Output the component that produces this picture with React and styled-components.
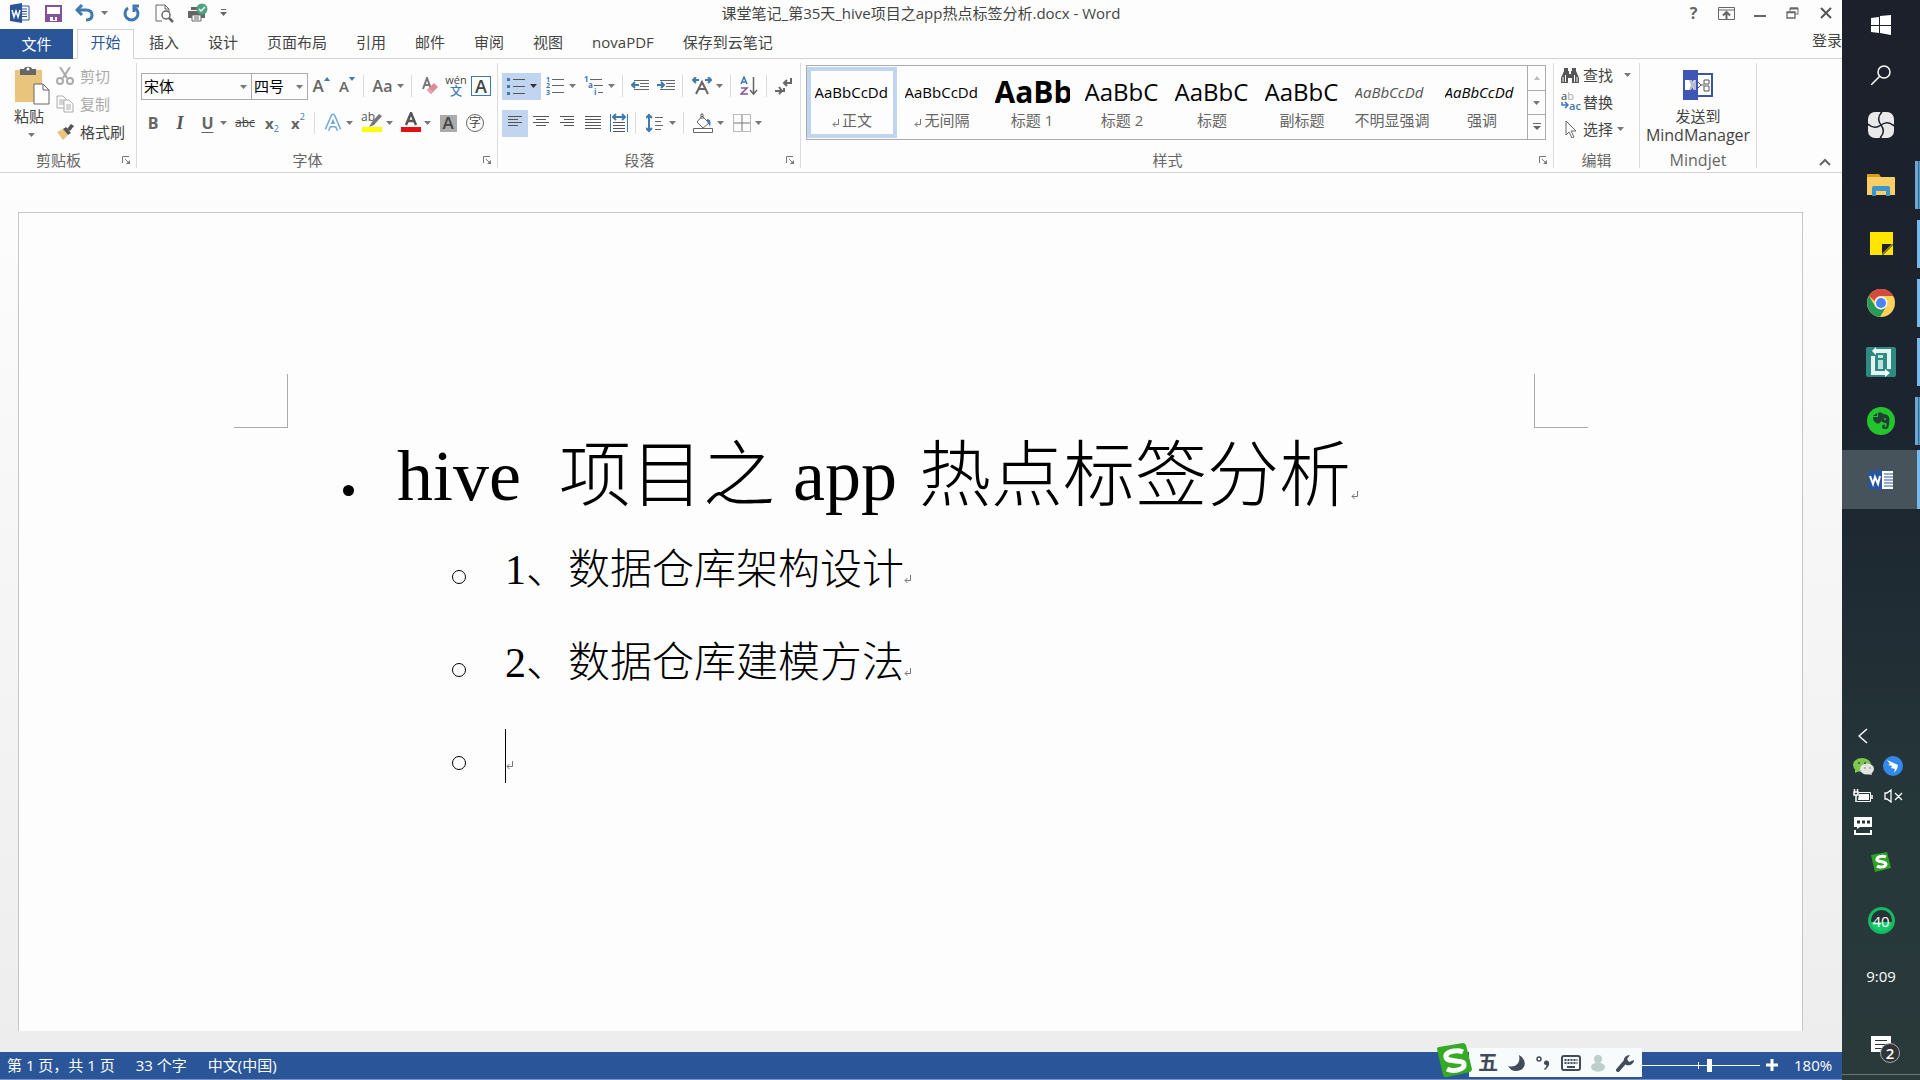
import styled, { createGlobalStyle, css } from 'styled-components';

const blue = '#2a5699';
const ink = '#444';
const accent = '#3f79b0';

export default function App() {
  return (
    <>
      <GlobalStyle />
      <Desktop>
        <WordWindow>
          <TitleBar />
          <TabBar />
          <Ribbon>
            <ClipboardGroup />
            <FontGroup />
            <ParagraphGroup />
            <StylesGroup />
            <EditGroup />
            <MindjetGroup />
            <RibbonEnd>
              <BareButton aria-label="折叠功能区">
                <svg width="12" height="8" fill="none" stroke="#666" strokeWidth="2"><path d="M1 7l5-5 5 5" /></svg>
              </BareButton>
            </RibbonEnd>
          </Ribbon>
          <Document />
          <Status />
        </WordWindow>
        <Taskbar />
      </Desktop>
    </>
  );
}

/* title bar */

function TitleBar() {
  return (
    <TitleRow>
      <QuickAccess>
        <QuickButton $w={32} aria-label="Word"><WordIcon /></QuickButton>
        <QuickButton $w={34} aria-label="保存">
          <svg width="17" height="17"><path d="M1 1h15v15H1z" fill="#fff" stroke="#84529b" strokeWidth="2" /><path d="M1 9h15v7H1z" fill="#84529b" /><path d="M5 12h7v4H5z" fill="#fff" /><path d="M8 12h2v3H8z" fill="#84529b" /></svg>
        </QuickButton>
        <QuickButton $w={28} aria-label="撤消">
          <svg width="19" height="18" fill="none" stroke={accent} strokeWidth="3"><path d="M3 6h8c4 0 6 2 6 5s-2 5-6 5" /><path d="M7 1L2 6l5 5" /></svg>
        </QuickButton>
        <QuickButton $w={12} aria-label="撤消列表"><Arrow /></QuickButton>
        <QuickButton $w={42} aria-label="恢复">
          <svg width="17" height="18" fill="none" stroke={accent} strokeWidth="3"><path d="M5 4a6.500 6.500 0 1 0 7 0" /><path d="M16 2h-5v6" /></svg>
        </QuickButton>
        <QuickButton $w={25} aria-label="打印预览">
          <svg width="19" height="19" fill="none" stroke="#666"><path d="M7 17H1V1h9l4 4v3M10 1v4h4" /><circle cx="11" cy="11" r="4" strokeWidth="1.500" /><path d="M14 14l4 4" strokeWidth="2.500" /></svg>
        </QuickButton>
        <QuickButton $w={40} aria-label="快速打印">
          <svg width="21" height="20"><path d="M4 4h9v3H4zM1 8h17v7H1z" fill="#666" /><path d="M5 12h9v6H5z" fill="#fff" stroke="#666" /><path d="M7 14h5M7 16h5" stroke="#666" /><circle cx="15" cy="6" r="5.500" fill="#4ba381" /><path d="M12 6l2 2 4-4" fill="none" stroke="#fff" strokeWidth="1.500" /></svg>
        </QuickButton>
        <QuickButton $w={12} aria-label="自定义快速访问工具栏">
          <svg width="7" height="8"><path d="M1 0h5v1H1zM0 3h7L3.500 7z" fill="#666" /></svg>
        </QuickButton>
      </QuickAccess>
      <WindowTitle>课堂笔记_第35天_hive项目之app热点标签分析.docx - Word</WindowTitle>
      <WindowControls>
        <ControlButton aria-label="帮助"><b>?</b></ControlButton>
        <ControlButton aria-label="功能区显示选项">
          <svg width="17" height="13" fill="none" stroke="#666"><path d="M.5.5h16v12H.5zM.5 3h16" /><path d="M8.500 12V5M5 8.500L8.500 5 12 8.500" strokeWidth="2" /></svg>
        </ControlButton>
        <ControlButton aria-label="最小化"><svg width="12" height="12"><path d="M0 8h12v2H0z" fill="#666" /></svg></ControlButton>
        <ControlButton aria-label="还原">
          <svg width="13" height="12" fill="none" stroke="#666"><path d="M4 4V1h8v6H9" /><path d="M4 1.500h8" strokeWidth="2" /><path d="M1 5h8v6H1zM1 5.500h8" strokeWidth="1.300" /></svg>
        </ControlButton>
        <ControlButton aria-label="关闭"><svg width="12" height="12"><path d="M1 1l10 10M11 1L1 11" stroke="#555" strokeWidth="2" /></svg></ControlButton>
      </WindowControls>
    </TitleRow>
  );
}

const tabs = ['插入', '设计', '页面布局', '引用', '邮件', '审阅', '视图', 'novaPDF', '保存到云笔记'];

function TabBar() {
  return (
    <TabRow>
      <FileTab>文件</FileTab>
      <ActiveTab>开始</ActiveTab>
      {tabs.map((name) => <Tab key={name}>{name}</Tab>)}
      <SignIn href="#login">登录</SignIn>
    </TabRow>
  );
}

/* ribbon */

function Footer({ label, launcher = true }) {
  return (
    <GroupFooter $launcher={launcher}>
      <GroupLabel>{label}</GroupLabel>
      {launcher && (
        <BareButton aria-label={label + '设置'}>
          <svg width="9" height="9" fill="none" stroke="#777"><path d="M.5 7V.5H7M3 3l4 4" /><path d="M8 4v4H4z" fill="#777" stroke="none" /></svg>
        </BareButton>
      )}
    </GroupFooter>
  );
}

function ClipboardGroup() {
  return (
    <Group $w={137}>
      <GroupBody>
        <PasteButton>
          <svg width="36" height="39">
            <path d="M1 4h27v32H1z" fill="#e8c47c" />
            <path d="M6 3h4c0-3 8-3 8 0h4v6H6z" fill="#666" /><circle cx="14" cy="3" r="1.500" fill="#fff" />
            <path d="M20 18h9l6 6v14H20z" fill="#fff" stroke="#666" /><path d="M29 18v6h6" fill="none" stroke="#666" />
          </svg>
          <span>粘贴</span>
          <Arrow />
        </PasteButton>
        <CommandList>
          <CommandButton disabled>
            <svg width="18" height="18" fill="none" stroke="#aaa" strokeWidth="2"><path d="M4 0l7 11M14 0L7 11" /><circle cx="4" cy="14" r="3" /><circle cx="14" cy="14" r="3" /></svg>
            剪切
          </CommandButton>
          <CommandButton disabled>
            <svg width="18" height="18" fill="#fff" stroke="#aaa"><path d="M1 1h6l3 3v9H1zM3 5h5M3 7h5M3 9h5" /><path d="M8 5h5l4 4v8H8zM10 10h5M10 12h5M10 14h5" /></svg>
            复制
          </CommandButton>
          <CommandButton>
            <svg width="18" height="16"><path d="M1 8l6-3 5 6-5 5C5 13 3 11 1 8z" fill="#e8c47c" /><path d="M7 5l3-2 5 6-3 2z" fill="#555" /><path d="M11 5l4-5 3 2-4 5z" fill="#555" /></svg>
            格式刷
          </CommandButton>
        </CommandList>
      </GroupBody>
      <Footer label="剪贴板" />
    </Group>
  );
}

function Drop({ w = 38, label, active, children }) {
  return (
    <DropButton $w={w} $active={active} aria-label={label}>
      <IconCell>{children}</IconCell>
      <Arrow dark={active} />
    </DropButton>
  );
}

function FontGroup() {
  return (
    <Group $w={361}>
      <ToolRows>
        <ToolRow>
          <Combo $w={111}>
            <ComboSelect aria-label="字体"><option>宋体</option></ComboSelect>
            <ComboArrow><Arrow /></ComboArrow>
          </Combo>
          <Combo $w={56} $joined>
            <ComboSelect aria-label="字号"><option>四号</option></ComboSelect>
            <ComboArrow><Arrow /></ComboArrow>
          </Combo>
          <ToolButton aria-label="增大字号"><Glyph $size={17}>A</Glyph><CaseMark><svg width="6" height="4"><path d="M0 4h6L3 0z" fill={accent} /></svg></CaseMark></ToolButton>
          <ToolButton aria-label="减小字号"><Glyph $size={15}>A</Glyph><CaseMark><svg width="6" height="4"><path d="M0 0h6L3 4z" fill={accent} /></svg></CaseMark></ToolButton>
          <Separator />
          <Drop w={40} label="更改大小写"><Glyph $size={16}>Aa</Glyph></Drop>
          <Separator />
          <ToolButton $w={28} aria-label="清除格式">
            <svg width="17" height="18"><path d="M1 12L5 1l4 11M2.500 8h5" fill="none" stroke="#777" strokeWidth="2" /><path d="M5 13l7-7 4 4-7 7z" fill="#e08b98" /><path d="M5 13l2-2 4 4-2 2z" fill="#ed9fac" /></svg>
          </ToolButton>
          <ToolButton $w={24} aria-label="拼音指南"><Pinyin><span>wén</span><b>文</b></Pinyin></ToolButton>
          <ToolButton aria-label="字符边框"><BoxedA>A</BoxedA></ToolButton>
        </ToolRow>
        <ToolRow>
          <ToolButton $w={24} aria-label="加粗"><Glyph $size={16} $bold>B</Glyph></ToolButton>
          <ToolButton $w={30} aria-label="倾斜"><SerifI>I</SerifI></ToolButton>
          <Drop w={36} label="下划线"><Glyph $size={16} $bold $underline>U</Glyph></Drop>
          <ToolButton $w={28} aria-label="删除线"><Struck>abc</Struck></ToolButton>
          <ToolButton aria-label="下标"><Glyph $size={15} $bold>x</Glyph><Sub>2</Sub></ToolButton>
          <ToolButton aria-label="上标"><Glyph $size={15} $bold>x</Glyph><Sup>2</Sup></ToolButton>
          <Separator />
          <Drop label="文本效果">
            <svg width="18" height="20" fill="none" strokeLinejoin="round"><path d="M3 17L9 3l6 14M5 12h8" stroke="#6fa8dc" strokeWidth="5" /><path d="M3 17L9 3l6 14M5 12h8" stroke="#fff" strokeWidth="2" /></svg>
          </Drop>
          <Drop w={40} label="突出显示">
            <svg width="22" height="22"><text x="0" y="9" fontFamily="Open Sans" fontSize="12" fill="#555">ab</text><path d="M18 2l3 2-8 9-5 2 3-5z" fill="#777" /><path d="M1 15h20v5H1z" fill="#ffff00" /></svg>
          </Drop>
          <Drop label="字体颜色">
            <svg width="20" height="22"><path d="M5 13L10 1l5 12M7 9h6" fill="none" stroke="#555" strokeWidth="2.500" /><path d="M0 15h20v5H0z" fill="#e40f14" /></svg>
          </Drop>
          <ToolButton aria-label="字符底纹"><ShadedA>A</ShadedA></ToolButton>
          <ToolButton $w={28} aria-label="带圈字符"><Circled>字</Circled></ToolButton>
        </ToolRow>
      </ToolRows>
      <Footer label="字体" />
    </Group>
  );
}

function AlignIcon({ rows }) {
  return (
    <svg width="16" height="14" stroke="#555">
      {rows.map(([from, to], i) => <path key={i} d={`M${from} ${i * 3 + 0.5}H${to}`} />)}
    </svg>
  );
}

function IndentIcon({ right }) {
  return (
    <svg width="18" height="14" fill="none" stroke="#666">
      <path d="M3 1.500h15M9 4.500h9M9 7.500h9M3 10.500h15" />
      <path d={right ? 'M0 6h7M4 3l3 3-3 3' : 'M1 6h7M4 3L1 6l3 3'} stroke={accent} strokeWidth="2" />
    </svg>
  );
}

function ParagraphGroup() {
  return (
    <Group $w={303}>
      <ToolRows>
        <ToolRow>
          <Drop w={39} active label="项目符号">
            <svg width="18" height="18"><path d="M6 2.500h12M6 9.500h12M6 16.500h12" stroke="#555" /><path d="M0 1h3v3H0zM0 8h3v3H0zM0 15h3v3H0z" fill={accent} /></svg>
          </Drop>
          <Drop w={39} label="编号">
            <svg width="18" height="20"><path d="M6 3.500h12M6 9.500h12M6 16.500h12" stroke="#666" /><g fontFamily="Open Sans" fontWeight="700" fontSize="7" fill={accent}><text y="6">1</text><text y="12">2</text><text y="19">3</text></g></svg>
          </Drop>
          <Drop w={39} label="多级列表">
            <svg width="20" height="20"><path d="M6 3.500h12M10 9.500h9M14 16.500h5" stroke="#666" /><g fontFamily="Open Sans" fontWeight="700" fontSize="8" fill={accent}><text y="6">1</text><text x="4" y="12">a</text><text x="10" y="19">i</text></g></svg>
          </Drop>
          <Separator />
          <ToolButton aria-label="减少缩进量"><IndentIcon /></ToolButton>
          <ToolButton aria-label="增加缩进量"><IndentIcon right /></ToolButton>
          <Separator />
          <Drop w={40} label="中文版式">
            <svg width="20" height="18" fill="none"><path d="M4 17l6-12 6 12M7 12h6" stroke="#666" strokeWidth="2" /><path d="M1 3h6M4 0L1 3l3 3M19 3h-6M16 0l3 3-3 3" stroke={accent} strokeWidth="2" /></svg>
          </Drop>
          <Separator />
          <ToolButton $w={28} aria-label="排序">
            <svg width="18" height="20" fill="none"><path d="M1 8l3-7 3 7M2 6h4" stroke={accent} strokeWidth="1.500" /><path d="M1 12h6l-6 6h7" stroke="#84529b" strokeWidth="1.500" /><path d="M13.500 1v17M10 14l3.500 4 3.500-4" stroke="#666" strokeWidth="1.500" /></svg>
          </ToolButton>
          <Separator />
          <ToolButton $w={26} aria-label="显示编辑标记">
            <svg width="18" height="18" fill="none" stroke="#666" strokeWidth="2"><path d="M16 1v5H9M12 3L9 6l3 3M0 14h6M4 10l3 4-3 3M7 14h2v-3" /></svg>
          </ToolButton>
        </ToolRow>
        <ToolRow>
          <ToolButton $active aria-label="左对齐"><AlignIcon rows={[[1, 15], [1, 11], [1, 15], [1, 11]]} /></ToolButton>
          <ToolButton aria-label="居中"><AlignIcon rows={[[0, 16], [3, 13], [0, 16], [3, 13]]} /></ToolButton>
          <ToolButton aria-label="右对齐"><AlignIcon rows={[[1, 15], [5, 15], [1, 15], [5, 15]]} /></ToolButton>
          <ToolButton aria-label="两端对齐"><AlignIcon rows={[[0, 16], [0, 16], [0, 16], [0, 16], [0, 16]]} /></ToolButton>
          <ToolButton aria-label="分散对齐">
            <svg width="18" height="20" fill="none"><path d="M.5 1v18M17.500 1v18" stroke={accent} /><path d="M3 4h12M6 1L3 4l3 3M12 1l3 3-3 3" stroke={accent} strokeWidth="2" /><path d="M3 9.500h12M3 12.500h12M3 15.500h12M3 18.500h12" stroke="#555" /></svg>
          </ToolButton>
          <Separator />
          <Drop w={40} label="行距">
            <svg width="18" height="20" fill="none"><path d="M3 2v16M0 5l3-3 3 3M0 15l3 3 3-3" stroke={accent} strokeWidth="2" /><path d="M9 4.500h8M9 8.500h6M9 12.500h8M9 16.500h6" stroke="#666" /></svg>
          </Drop>
          <Separator />
          <Drop w={40} label="底纹">
            <svg width="20" height="20" fill="none" stroke="#666"><path d="M9 3l7 7-6 5-6-6zM8 6V1h2v5" /><path d="M14 6c4 0 4 4 3 8-1-3-2-4-3-5z" fill={accent} stroke="none" /><path d="M.5 15.500h19v4H.5z" fill="#fff" /></svg>
          </Drop>
          <Drop label="边框">
            <svg width="18" height="18" fill="none" stroke="#777"><path d="M.5.5h17v17H.5z" strokeDasharray="1 1" /><path d="M9 1v16M1 9h16" /></svg>
          </Drop>
        </ToolRow>
      </ToolRows>
      <Footer label="段落" />
    </Group>
  );
}

const styleItems = [
  { name: '正文', sample: 'AaBbCcDd', mark: true, active: true },
  { name: '无间隔', sample: 'AaBbCcDd', mark: true },
  { name: '标题 1', sample: 'AaBb', size: 30, bold: true },
  { name: '标题 2', sample: 'AaBbC', size: 24 },
  { name: '标题', sample: 'AaBbC', size: 24 },
  { name: '副标题', sample: 'AaBbC', size: 24 },
  { name: '不明显强调', sample: 'AaBbCcDd', italic: true, color: '#555' },
  { name: '强调', sample: 'AaBbCcDd', italic: true },
];

function StylesGroup() {
  return (
    <Group $w={753}>
      <GalleryWrap>
        <Gallery>
          {styleItems.map((item) => (
            <StyleItem key={item.name} $active={item.active}>
              <Sample $size={item.size} $bold={item.bold} $italic={item.italic} $color={item.color}>{item.sample}</Sample>
              <StyleName>{item.mark && <ReturnMark />}{item.name}</StyleName>
            </StyleItem>
          ))}
          <GalleryScroll>
            <ScrollButton aria-label="上一行" disabled><svg width="6" height="4"><path d="M0 4h6L3 0z" fill="#bbb" /></svg></ScrollButton>
            <ScrollButton aria-label="下一行"><Arrow /></ScrollButton>
            <ScrollButton aria-label="其他"><svg width="8" height="8"><path d="M0 0h8v1H0zM0 3h8L4 7z" fill="#666" /></svg></ScrollButton>
          </GalleryScroll>
        </Gallery>
      </GalleryWrap>
      <Footer label="样式" />
    </Group>
  );
}

function EditGroup() {
  return (
    <Group $w={86}>
      <EditList>
        <CommandButton $gap={4}>
          <svg width="18" height="17" fill="#555"><path d="M3 1h4v3h1v3h2V4h1V1h4v3l3 7v5h-7v-5H7v5H0v-5l3-7z" /><path d="M2 10v5M4.500 8v7M13.500 8v7M16 10v5" stroke="#fff" /></svg>
          查找<ArrowSpace $pad={7}><Arrow /></ArrowSpace>
        </CommandButton>
        <CommandButton $gap={2}>
          <svg width="20" height="20"><g fontFamily="Open Sans" fontSize="11"><text y="8" fill="#444">a<tspan fill="#aaa">b</tspan></text><text x="8" y="18" fill={accent} fontWeight="600">ac</text></g><path d="M1 10v3h5M4 10l3 3-3 3" fill="none" stroke={accent} strokeWidth="1.500" /></svg>
          替换
        </CommandButton>
        <CommandButton $gap={4}>
          <svg width="18" height="18"><path d="M5 1v14l3-3 3 6 2-1-3-6h5z" fill="#fff" stroke="#666" /></svg>
          选择<ArrowSpace $pad={0}><Arrow /></ArrowSpace>
        </CommandButton>
      </EditList>
      <Footer label="编辑" launcher={false} />
    </Group>
  );
}

function MindjetGroup() {
  return (
    <Group $w={117} $size={16}>
      <SendButton>
        <svg width="30" height="30">
          <path d="M14 4h15v22H14z" fill="#fff" stroke="#3b55a5" strokeWidth="2" /><path d="M0 0h15v30H0z" fill="#3f55b3" />
          <path d="M2 10h5l2 3 2-3h2v10h-2l-2-3-2 3H2z" fill="#fff" /><path d="M6 10h3l1 3 2-3h1v10h-2l-1-3-2 3H6l2-5z" fill="#b9bccf" />
          <path d="M15 12l3 3-3 3M18 15h3M21 10h5v4h-5zM21 16h5v5h-5z" fill="none" stroke="#555" />
        </svg>
        <SendLabel><Small>发送到</Small><br />MindManager</SendLabel>
      </SendButton>
      <Footer label="Mindjet" launcher={false} />
    </Group>
  );
}

/* document */

const outline = ['1、数据仓库架构设计', '2、数据仓库建模方法', ''];

function Document() {
  return (
    <Canvas>
      <Page>
        <Corners>
          <Corner $side="right" />
          <Corner $side="left" />
        </Corners>
        <Article>
          <HeadingLine>
            <Dot />
            <DocTitle><Latin $chars={4}>hive</Latin>项目之<Latin $chars={3} $inner>app</Latin>热点标签分析</DocTitle>
            <ReturnMark />
          </HeadingLine>
          <Outline>
            {outline.map((text, i) => (
              <OutlineItem key={i}>
                <Ring />
                {text ? <span>{text}</span> : <Caret />}
                <ReturnMark />
              </OutlineItem>
            ))}
          </Outline>
        </Article>
      </Page>
    </Canvas>
  );
}

function Status() {
  return (
    <StatusBar>
      <StatusText>第 1 页，共 1 页</StatusText>
      <StatusText>33 个字</StatusText>
      <StatusText>中文(中国)</StatusText>
      <Zoom>
        <ZoomRange type="range" min="0" max="100" defaultValue="60" aria-label="显示比例" />
        <ZoomPlus aria-label="放大"><svg width="12" height="12"><path d="M0 4.500h12v3H0zM4.500 0h3v12h-3z" fill="#fff" /></svg></ZoomPlus>
        <ZoomValue>180%</ZoomValue>
      </Zoom>
      <ImeBar>
        <ImeLogo>
          <svg width="37" height="36"><path d="M1 6Q1 4 3 4L27 0q2 0 3 2l6 24q0 2-2 3L11 34q-3 1-4-2z" fill="#35ab25" /><path d="M27 9C20 6 9 9 10 14c1 6 17 2 18 7 1 6-11 8-17 5" fill="none" stroke="#fff" strokeWidth="5" /></svg>
        </ImeLogo>
        <ImeButton $w={30}>五</ImeButton>
        <ImeButton aria-label="半角"><svg width="18" height="18"><path d="M11 1c9 5 7 16-3 16-4 0-6-2-8-5 7 2 13-2 11-11z" fill="#414b5c" /></svg></ImeButton>
        <ImeButton aria-label="中文标点"><svg width="16" height="18"><circle cx="3" cy="5" r="2" fill="none" stroke="#414b5c" strokeWidth="1.500" /><path d="M9 7c4-2 7 4 0 9l-1-1c2-2 3-3 2-4-2 0-3-3-1-4z" fill="#414b5c" /></svg></ImeButton>
        <ImeButton aria-label="软键盘"><svg width="20" height="16"><rect x="1" y="1" width="18" height="14" rx="2" fill="none" stroke="#414b5c" strokeWidth="2" /><path d="M3.500 5h13M3.500 8h13" stroke="#414b5c" strokeWidth="2" strokeDasharray="2 1" /><path d="M6 12h8" stroke="#414b5c" strokeWidth="2" /></svg></ImeButton>
        <ImeButton aria-label="用户"><svg width="16" height="18" fill="#bcd0cb"><circle cx="8" cy="5" r="4" /><path d="M1 13c0-6 14-6 14 0 0 6-14 6-14 0z" /></svg></ImeButton>
        <ImeButton aria-label="工具箱"><svg width="18" height="18"><path d="M2 16l7-8" stroke="#414b5c" strokeWidth="4" strokeLinecap="round" /><path d="M8 8c-1-4 2-7 6-7l-3 4 2 3 5-2c0 4-4 6-8 5z" fill="#414b5c" /></svg></ImeButton>
      </ImeBar>
    </StatusBar>
  );
}

/* taskbar */

function WordIcon() {
  return (
    <svg width="20" height="20"><path d="M11 3h8v14h-8" fill="#fff" stroke={blue} /><path d="M12 6h5M12 8.500h5M12 11h5M12 13.500h5" stroke={blue} /><path d="M0 2l12-2v20L0 18z" fill={blue} /><path d="M2 7l2 7 2-6 2 6 2-7" fill="none" stroke="#fff" strokeWidth="1.500" /></svg>
  );
}

function Taskbar() {
  return (
    <TaskColumn>
      <SystemButton aria-label="开始">
        <svg width="20" height="20" fill="#fff"><path d="M0 3l8-1v8H0zM9 1l11-1v10H9zM0 11h8v7l-8-1zM9 11h11v9L9 18z" /></svg>
      </SystemButton>
      <SystemButton aria-label="搜索">
        <svg width="20" height="20" fill="none" stroke="#fff" strokeWidth="1.500"><circle cx="13" cy="7" r="6" /><path d="M8.500 11.500L0 20" /></svg>
      </SystemButton>
      <SystemButton aria-label="应用">
        <svg width="26" height="26">
          <path d="M7 0h5l1 1 1-1h5a7 7 0 0 1 7 7v5l-1 1 1 1v5a7 7 0 0 1-7 7h-5l-1-1-1 1H7a7 7 0 0 1-7-7v-5l1-1-1-1V7a7 7 0 0 1 7-7z" fill="#e9e9e9" />
          {[0, 90, 180, 270].map((a) => <path key={a} transform={`rotate(${a} 13 13)`} d="M14 0C10 4 10 9 13 13" fill="none" stroke="#1d222d" strokeWidth="1.500" />)}
        </svg>
      </SystemButton>
      <Apps>
        <AppButton aria-label="文件资源管理器">
          <svg width="28" height="24"><path d="M0 2q0-1 1-1h10l2 3h14q1 0 1 1v17H0z" fill="#f8cf67" /><path d="M0 1h12l2 3H0z" fill="#db9b1a" /><path d="M5 23v-8q0-2 2-2h14q2 0 2 2v8h-4v-5H9v5z" fill="#3f94cc" /></svg>
          <Running $multi />
        </AppButton>
        <AppButton aria-label="便笺">
          <svg width="23" height="23"><path d="M0 0h23v12L12 23H0z" fill="#ffe500" /><path d="M12 12h10L12 22z" fill="#1f222b" /><path d="M23 13v10H13z" fill="#ffe500" /></svg>
          <Running />
        </AppButton>
        <AppButton aria-label="Chrome">
          <svg width="28" height="28"><circle cx="14" cy="14" r="14" fill="#fcd25c" /><path d="M2 7a14 14 0 0 1 24.400 0H14a7 7 0 0 0-6.500 5z" fill="#d34b3f" /><path d="M2 7a14 14 0 0 0 11 21l6-10a7 7 0 0 1-11-1z" fill="#289b5b" /><circle cx="14" cy="14" r="6.500" fill="#f5f5f5" /><circle cx="14" cy="14" r="5" fill="#4a85ed" /></svg>
          <Running />
        </AppButton>
        <AppButton aria-label="笔记工具">
          <svg width="30" height="30"><rect width="30" height="30" rx="2" fill="#2e8b83" /><path d="M10 4h13v18M20 26H7V9" fill="none" stroke="#e8f3f1" strokeWidth="4" /><path d="M10 0L6 4l4 4zM19 22l5 4-5 4z" fill="#fff" /><path d="M12 8h5v3h-5zM12 13h5v9h-5z" fill="#bfe0dc" /></svg>
          <Running />
        </AppButton>
        <AppButton aria-label="印象笔记">
          <svg width="28" height="28"><circle cx="14" cy="14" r="14" fill="#23c52f" /><path d="M11 6c2-1 5 0 5 1 3 0 5 1 6 3 1 4 0 9-1 11-2 2-6 1-6-1 0-3 3-3 3-2v1c-1 0-1 1 0 1 2 0 2-2 1-4-2 0-4-1-5-2-1 3-3 3-5 2-2-1-3-3-3-6h5z" fill="#204031" /><path d="M6 9l4-3v3z" fill="#204031" /><circle cx="18" cy="12" r="1" fill="#23c52f" /></svg>
          <Running $multi />
        </AppButton>
        <AppButton $active aria-label="Word">
          <svg width="26" height="22"><path d="M14 2h11v18H14z" fill="#fff" /><path d="M16 5h9M16 8h9M16 11h9M16 14h9M16 17h9" stroke={blue} /><path d="M0 2l14-2v22L0 20z" fill={blue} /><path d="M2 7l3 8 2-7 3 7 2-8" fill="none" stroke="#fff" strokeWidth="2" /></svg>
          <Running $full />
        </AppButton>
      </Apps>
      <Tray>
        <TrayButton aria-label="显示隐藏的图标"><svg width="10" height="16" fill="none" stroke="#fff" strokeWidth="1.500"><path d="M9 1L1 8l8 7" /></svg></TrayButton>
        <i />
        <TrayButton aria-label="微信"><svg width="21" height="17"><ellipse cx="9" cy="7" rx="9" ry="7" fill="#7fc84a" /><ellipse cx="14" cy="11" rx="7" ry="5.500" fill="#e2e5e2" /><path d="M2 11v4l4-2z" fill="#7fc84a" /><path d="M18 14l1 3-4-1z" fill="#e2e5e2" /><path d="M5 5h2M11 5h2" stroke="#375" strokeWidth="2" /><path d="M11 10h2M16 10h2" stroke="#888" /></svg></TrayButton>
        <TrayButton aria-label="钉钉"><svg width="20" height="20"><circle cx="10" cy="10" r="10" fill="#3289e7" /><path d="M4 4l11 5-1 4-3 4 1-4-4-1 1-2-4-1 2-1z" fill="#fff" /></svg></TrayButton>
        <TrayButton aria-label="电池"><svg width="20" height="15" fill="none" stroke="#fff"><path d="M6 3.500h11.500v9H4" /><path d="M6 5h10v6H5z" fill="#fff" stroke="none" /><path d="M19 6v4M1 3h4v3H1zM1.500 0v3M4.500 0v3M3 6v7" strokeWidth="1.500" /></svg></TrayButton>
        <TrayButton aria-label="静音"><svg width="19" height="14" fill="none" stroke="#fff" strokeWidth="1.300"><path d="M1 4h2l4-3v12L3 10H1zM11 4l7 7M18 4l-7 7" /></svg></TrayButton>
        <TrayButton aria-label="消息"><svg width="18" height="18"><path d="M0 0h18v10H6l-3 2v-2H0z" fill="#fff" /><path d="M3 5h3M8 5h3M13 5h3" stroke="#263437" strokeWidth="3" /><path d="M1 13v4h16v-4" fill="none" stroke="#fff" strokeWidth="2" /></svg></TrayButton>
      </Tray>
      <TrayWide aria-label="搜狗输入法">
        <svg width="20" height="20"><path d="M0 3l16-3 4 16-16 4z" fill="#2fa226" /><path d="M15 5c-4-2-10 0-9 3 1 2 8 1 9 4 0 3-6 4-9 2" fill="none" stroke="#fff" strokeWidth="3" /></svg>
      </TrayWide>
      <TrayWide><Battery>40</Battery></TrayWide>
      <Clock>9:09</Clock>
      <NoticeButton aria-label="通知">
        <svg width="20" height="20"><path d="M0 0h20v16h-7l-3 4v-4H0z" fill="#fff" /><path d="M4 4.500h12M4 8.500h12M4 12.500h8" stroke="#263437" /></svg>
        <Badge>2</Badge>
      </NoticeButton>
    </TaskColumn>
  );
}

function Arrow({ dark }) {
  return <svg width="7" height="4"><path d="M0 0h7L3.500 4z" fill={dark ? '#333' : '#777'} /></svg>;
}

function ReturnMark() {
  return <MarkSvg width="7" height="9" viewBox="0 0 7 9"><path d="M6.500 0v5.500H1M3.500 3L1 5.500 3.500 8" fill="none" stroke="#777" /></MarkSvg>;
}

const GlobalStyle = createGlobalStyle`
  * {
    box-sizing: border-box;
  }
  body {
    margin: 0;
    overflow: hidden;
    font: 15px/20px "Open Sans", "Noto Sans CJK SC", sans-serif;
    color: ${ink};
  }
  button, select {
    font: inherit;
    color: inherit;
    background: none;
    border: 0;
    padding: 0;
    margin: 0;
  }
  svg {
    display: block;
    flex: none;
  }
`;

const center = css`
  display: flex;
  align-items: center;
  justify-content: center;
`;

const Desktop = styled.div`
  display: flex;
  height: 100vh;
`;

const WordWindow = styled.main`
  flex: 1;
  min-width: 0;
  display: flex;
  flex-direction: column;
  background: #fdfdfd;
`;

const TitleRow = styled.header`
  display: grid;
  grid-template-columns: 1fr auto 1fr;
  align-items: center;
  height: 29px;
  padding-bottom: 3px;
  flex: none;
`;

const QuickAccess = styled.div`
  display: flex;
  padding-left: 4px;
`;

const QuickButton = styled.button`
  ${center}
  width: ${(p) => p.$w}px;
  height: 24px;
`;

const WindowTitle = styled.div`
  line-height: 22px;
  white-space: nowrap;
`;

const WindowControls = styled.div`
  display: flex;
  justify-content: flex-end;
`;

const ControlButton = styled.button`
  ${center}
  width: 33px;
  height: 24px;
  color: #666;
  font-size: 16px;
`;

const TabRow = styled.nav`
  display: flex;
  gap: 1px;
  height: 30px;
  flex: none;
  border-bottom: 1px solid #d2d2d2;
`;

const Tab = styled.button`
  padding: 0 14px;
  height: 26px;
  white-space: nowrap;
`;

const FileTab = styled(Tab)`
  width: 73px;
  height: 30px;
  background: ${blue};
  color: #fff;
  margin-right: 3px;
`;

const ActiveTab = styled(Tab)`
  width: 57px;
  height: 30px;
  padding: 0 0 4px;
  border: 1px solid #d2d2d2;
  border-bottom-color: #fdfdfd;
  color: ${blue};
`;

const SignIn = styled.a`
  margin-left: auto;
  color: ${ink};
  text-decoration: none;
  line-height: 22px;
`;

const Ribbon = styled.section`
  display: flex;
  flex: none;
  padding: 4px 0;
  border-bottom: 1px solid #d2d2d2;
`;

const Group = styled.div`
  display: flex;
  flex-direction: column;
  width: ${(p) => p.$w}px;
  height: 105px;
  font-size: ${(p) => p.$size || 15}px;
  border-right: 1px solid #dcdcdc;
  flex: none;
`;

const GroupBody = styled.div`
  flex: 1;
  display: flex;
  padding-left: 8px;
`;

const GroupFooter = styled.div`
  display: flex;
  align-items: center;
  height: 16px;
  padding: 0 ${(p) => (p.$launcher ? 5 : 0)}px 0 0;
  line-height: 16px;
  color: #666;
`;

const GroupLabel = styled.span`
  flex: 1;
  padding-right: ${(p) => p.$end || 5}px;
  text-align: center;

  &:only-child {
    padding: 0;
  }
`;

const BareButton = styled.button`
  ${center}
`;

const RibbonEnd = styled.div`
  flex: 1;
  display: flex;
  justify-content: flex-end;
  align-items: flex-end;
  padding: 0 11px 2px 0;
`;

const PasteButton = styled.button`
  display: flex;
  flex-direction: column;
  align-items: center;
  padding: 3px 0 0 6px;
  width: 42px;
  margin-right: 6px;

  span {
    margin: 1px 6px 7px 0;
  }

  svg + span + svg {
    margin-right: 2px;
  }
`;

const CommandList = styled.div`
  display: flex;
  flex-direction: column;
  gap: 8px;
  padding-top: 3px;
`;

const EditList = styled(CommandList)`
  flex: 1;
  gap: 7px;
  padding: 2px 0 0 7px;
`;

const CommandButton = styled.button`
  display: flex;
  align-items: center;
  gap: ${(p) => p.$gap || 6}px;
  height: 20px;
  white-space: nowrap;

  &:disabled {
    color: #aaa;
  }
`;

const ArrowSpace = styled.span`
  padding-left: ${(p) => p.$pad}px;
`;

const ToolRows = styled.div`
  flex: 1;
  display: flex;
  flex-direction: column;
  gap: 10px;
  padding: 10px 0 0 4px;
`;

const ToolRow = styled.div`
  display: flex;
  height: 27px;
`;

const ToolButton = styled.button`
  ${center}
  width: ${(p) => p.$w || 26}px;
  height: 27px;
  padding-bottom: 1px;
  background: ${(p) => (p.$active ? '#c2d5f0' : 'none')};
`;

const DropButton = styled.button`
  display: grid;
  grid-template-columns: 1fr 11px;
  align-items: center;
  width: ${(p) => p.$w}px;
  height: 27px;
  padding-bottom: 1px;
  background: ${(p) => (p.$active ? '#c2d5f0' : 'none')};
`;

const IconCell = styled.span`
  ${center}
`;

const Separator = styled.i`
  width: 1px;
  height: 22px;
  margin: 2px 4px 0 3px;
  background: #dcdcdc;
`;

const Combo = styled.div`
  display: grid;
  width: ${(p) => p.$w}px;
  border: 1px solid #ababab;
  border-left-width: ${(p) => (p.$joined ? 0 : 1)}px;
`;

const ComboSelect = styled.select`
  grid-area: 1 / 1;
  appearance: none;
  padding: 0 0 1px 2px;
  color: #000;
`;

const ComboArrow = styled.span`
  grid-area: 1 / 1;
  align-self: center;
  justify-self: end;
  padding-right: 4px;
  pointer-events: none;
`;

const Glyph = styled.span`
  font-size: ${(p) => p.$size}px;
  font-weight: ${(p) => (p.$bold ? 700 : 600)};
  line-height: 20px;
  color: #666;
  text-decoration: ${(p) => (p.$underline ? 'underline' : 'none')};
  text-underline-offset: 3px;
`;

const CaseMark = styled.span`
  align-self: flex-start;
  padding-top: 4px;
`;

const Pinyin = styled.span`
  display: grid;
  justify-items: center;
  font-size: 11px;
  line-height: 11px;

  b {
    font-size: 12px;
    font-weight: 500;
    line-height: 13px;
    color: ${accent};
  }
`;

const BoxedA = styled.span`
  ${center}
  width: 20px;
  height: 20px;
  border: 1px solid ${accent};
  font-size: 18px;
  font-weight: 600;
`;

const ShadedA = styled.span`
  ${center}
  width: 17px;
  height: 17px;
  background: #ababab;
  font-size: 17px;
  font-weight: 600;
`;

const Circled = styled.span`
  ${center}
  width: 18px;
  height: 18px;
  border: 1px solid #666;
  border-radius: 50%;
  font-size: 12px;
`;

const SerifI = styled.span`
  font: italic 700 18px/20px "Liberation Serif", serif;
  color: #555;
`;

const Struck = styled.span`
  font-size: 12px;
  text-decoration: line-through;
`;

const Sub = styled.span`
  align-self: flex-end;
  font-size: 9px;
  line-height: 14px;
  color: ${accent};
`;

const Sup = styled(Sub)`
  align-self: flex-start;
`;

const GalleryWrap = styled.div`
  flex: 1;
  padding: 2px 7px 0 5px;
`;

const Gallery = styled.div`
  display: flex;
  height: 75px;
  border: 1px solid #ababab;
`;

const StyleItem = styled.button`
  display: flex;
  flex-direction: column;
  align-items: center;
  flex: 1;
  min-width: 0;
  margin: 1px 0;
  padding-top: 6px;
  border: 4px solid ${(p) => (p.$active ? '#c2d5f0' : 'transparent')};
`;

const Sample = styled.span`
  width: 75px;
  height: 33px;
  overflow: hidden;
  font-size: ${(p) => p.$size || 15}px;
  font-weight: ${(p) => (p.$bold ? 700 : 400)};
  font-style: ${(p) => (p.$italic ? 'italic' : 'normal')};
  line-height: 30px;
  color: ${(p) => p.$color || '#000'};
  text-align: left;
  white-space: nowrap;
`;

const StyleName = styled.span`
  display: flex;
  align-items: center;
  gap: 3px;
  color: #666;
  white-space: nowrap;

  svg {
    margin-top: 6px;
  }
`;

const GalleryScroll = styled.div`
  display: flex;
  flex-direction: column;
  width: 18px;
  border-left: 1px solid #ababab;
`;

const ScrollButton = styled.button`
  ${center}
  flex: 1;

  & + & {
    border-top: 1px solid #ababab;
  }
`;

const SendButton = styled.button`
  flex: 1;
  display: flex;
  flex-direction: column;
  align-items: center;
  padding-top: 7px;
`;

const SendLabel = styled.span`
  margin-top: 7px;
  line-height: 19px;
`;

const Small = styled.span`
  font-size: 15px;
`;

const Canvas = styled.div`
  flex: 1;
  min-height: 0;
  display: flex;
  padding: 39px 39px 21px 18px;
  background: linear-gradient(#fdfdfd, #ededed);
`;

const Page = styled.div`
  flex: 1;
  overflow: hidden;
  padding: 161px 214px 0 215px;
  background: #fdfdfd;
  border: 1px solid #c6c6c6;
  border-bottom: 0;
`;

const Corners = styled.div`
  display: flex;
  justify-content: space-between;
`;

const Corner = styled.i`
  width: 54px;
  height: 54px;
  border-bottom: 1px solid #aaa;
  border-${(p) => p.$side}: 1px solid #aaa;
`;

const Article = styled.article`
  padding-left: 109px;
  color: #000;
  font-family: "Liberation Serif", "Noto Sans CJK SC", serif;
  font-weight: 300;
`;

const HeadingLine = styled.div`
  display: flex;
  align-items: center;
  height: 95px;

  > svg {
    margin-top: 40px;
  }
`;

const Dot = styled.i`
  width: 11px;
  height: 11px;
  margin: 30px 43px 0 0;
  border-radius: 50%;
  background: #000;
`;

const DocTitle = styled.h1`
  margin: 0;
  font-size: 72px;
  line-height: 96px;
  font-weight: 300;
  white-space: nowrap;
`;

const Latin = styled.span`
  display: inline-block;
  width: ${(p) => p.$chars * 36}px;
  margin: 0 18px 0 ${(p) => (p.$inner ? 18 : 0)}px;
`;

const Outline = styled.ul`
  margin: 0;
  padding: 0 0 0 109px;
  list-style: none;
`;

const OutlineItem = styled.li`
  display: flex;
  align-items: center;
  height: 93px;
  font-size: 42px;
  white-space: nowrap;

  > svg {
    margin-top: 20px;
  }
`;

const Ring = styled.i`
  width: 14px;
  height: 14px;
  margin: 14px 39px 0 0;
  border: 1px solid #000;
  border-radius: 50%;
`;

const Caret = styled.i`
  width: 1px;
  height: 54px;
  background: #000;
`;

const MarkSvg = styled.svg`
  align-self: center;
`;

const StatusBar = styled.footer`
  position: relative;
  display: flex;
  align-items: center;
  gap: 21px;
  flex: none;
  height: 28px;
  padding: 0 8px 1px 7px;
  background: ${blue};
  border-bottom: 1px solid #7a93bd;
  color: #fff;
`;

const StatusText = styled.span`
  white-space: nowrap;
`;

const Zoom = styled.div`
  display: flex;
  align-items: center;
  margin-left: auto;
`;

const ZoomRange = styled.input`
  appearance: none;
  width: 124px;
  height: 13px;
  margin: 0 6px 0 0;
  background:
    linear-gradient(#fff, #fff) center / 100% 1px no-repeat,
    linear-gradient(#fff, #fff) center / 1px 7px no-repeat;

  &::-webkit-slider-thumb {
    appearance: none;
    width: 5px;
    height: 13px;
    background: #fff;
  }
`;

const ZoomPlus = styled.button`
  margin-right: 16px;
`;

const ZoomValue = styled.span`
  width: 40px;
`;

const ImeBar = styled.div`
  position: absolute;
  right: 200px;
  bottom: 2px;
  display: flex;
  align-items: center;
  height: 29px;
  padding-right: 4px;
  background: #f8fbfb;
  color: #414b5c;
`;

const ImeLogo = styled.span`
  margin: 0 0 4px -33px;
`;

const ImeButton = styled.button`
  ${center}
  width: ${(p) => p.$w || 27}px;
  height: 27px;
  font-size: 20px;
  font-weight: 700;
`;

const TaskColumn = styled.aside`
  display: flex;
  flex-direction: column;
  width: 78px;
  flex: none;
  color: #fff;
  background: linear-gradient(#1c202b, #1c2630 45%, #26373a 75%, #2a3a3b);
`;

const SystemButton = styled.button`
  ${center}
  height: 50px;
`;

const Apps = styled.div`
  padding-top: 5px;
  margin-bottom: auto;
`;

const AppButton = styled.button`
  position: relative;
  ${center}
  width: 100%;
  height: 59px;
  background: ${(p) => (p.$active ? '#46535b' : 'none')};
`;

const Running = styled.i`
  position: absolute;
  right: 0;
  top: ${(p) => (p.$full ? 0 : 6)}px;
  bottom: ${(p) => (p.$full ? 0 : 5)}px;
  width: ${(p) => (p.$multi ? 5 : 3)}px;
  background: ${(p) => (p.$multi ? 'linear-gradient(90deg, #6ea6cf 3px, #33688f 3px 4px, #5797c8 4px)' : '#76b9ed')};
`;

const Tray = styled.div`
  display: grid;
  grid-template-columns: 30px 30px;
  grid-auto-rows: 30px;
  padding-left: 6px;
`;

const TrayButton = styled.button`
  ${center}
`;

const TrayWide = styled.button`
  ${center}
  height: 59px;

  ${Tray} + & {
    height: 42px;
    margin-bottom: 8px;
  }
`;

const Battery = styled.span`
  ${center}
  width: 27px;
  height: 27px;
  border: 3px solid #16b765;
  border-radius: 50%;
  background: linear-gradient(#263437 55%, #12cc69 55%);
`;

const Clock = styled.time`
  padding: 16px 0 39px;
  text-align: center;
`;

const NoticeButton = styled.button`
  position: relative;
  ${center}
  height: 50px;
  padding-bottom: 8px;
  margin-bottom: 5px;
  border-bottom: 1px solid #6b7777;
`;

const Badge = styled.span`
  position: absolute;
  left: 38px;
  top: 18px;
  ${center}
  width: 20px;
  height: 20px;
  border: 1px solid #aaa;
  border-radius: 50%;
  background: #303437;
  font-weight: 600;
`;
